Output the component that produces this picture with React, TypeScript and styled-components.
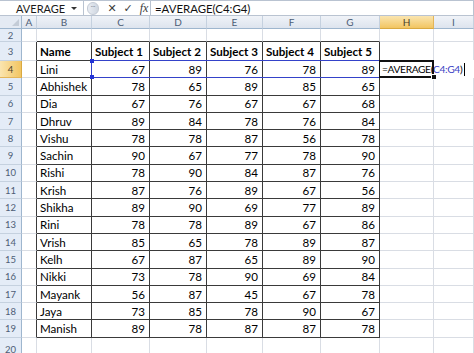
import React from 'react';
import styled, { createGlobalStyle } from 'styled-components';

const GlobalStyle = createGlobalStyle`
  html, body {
    margin: 0;
    padding: 0;
    background: #ffffff;
    overflow: hidden;
  }
  body {
    font-family: Lato, "Open Sans", sans-serif;
  }
`;

const COLS = ['A', 'B', 'C', 'D', 'E', 'F', 'G', 'H', 'I'];
const COL_WIDTHS = '22px 15px 55px 58px 57px 56px 58px 59px 54px 1fr';

const HEADERS = ['Name', 'Subject 1', 'Subject 2', 'Subject 3', 'Subject 4', 'Subject 5'];

const DATA: [string, number, number, number, number, number][] = [
  ['Lini', 67, 89, 76, 78, 89],
  ['Abhishek', 78, 65, 89, 85, 65],
  ['Dia', 67, 76, 67, 67, 68],
  ['Dhruv', 89, 84, 78, 76, 84],
  ['Vishu', 78, 78, 87, 56, 78],
  ['Sachin', 90, 67, 77, 78, 90],
  ['Rishi', 78, 90, 84, 87, 76],
  ['Krish', 87, 76, 89, 67, 56],
  ['Shikha', 89, 90, 69, 77, 89],
  ['Rini', 78, 78, 89, 67, 86],
  ['Vrish', 85, 65, 78, 89, 87],
  ['Kelh', 67, 87, 65, 89, 90],
  ['Nikki', 73, 78, 90, 69, 84],
  ['Mayank', 56, 87, 45, 67, 78],
  ['Jaya', 73, 85, 78, 90, 67],
  ['Manish', 89, 78, 87, 87, 78],
];

const Window = styled.div`
  width: 474px;
  height: 353px;
  display: flex;
  flex-direction: column;
  overflow: hidden;
  background: #fff;
`;

const TopStrip = styled.div`
  height: 3px;
  background: linear-gradient(#aab3bf, #c9d1dc);
`;

const FormulaBar = styled.div`
  height: 16px;
  display: flex;
  align-items: stretch;
  background: #dfe5ee;
`;

const NameBox = styled.div`
  width: 84px;
  display: flex;
  align-items: center;
  justify-content: space-between;
  padding: 0 6px 0 16px;
  box-sizing: border-box;
  background: #fff;
  border: 1px solid #b9c3d1;
  border-left: none;
  font-size: 11px;
  color: #1a1a1a;
`;

const DropArrow = styled.span`
  width: 0;
  height: 0;
  border-left: 3px solid transparent;
  border-right: 3px solid transparent;
  border-top: 3px solid #333;
`;

const Buttons = styled.div`
  width: 66px;
  display: flex;
  align-items: center;
  gap: 4px;
  padding-left: 3px;
  box-sizing: border-box;
  background: #fff;
  border-top: 1px solid #b9c3d1;
  border-bottom: 1px solid #b9c3d1;
`;

const Grip = styled.span`
  width: 12px;
  height: 13px;
  margin-right: 3px;
  border-radius: 7px;
  background: linear-gradient(90deg, #e9edf3, #cfd6e0);
  border: 1px solid #c3cad5;
  box-sizing: border-box;
  display: flex;
  align-items: flex-start;
  justify-content: center;
  font-size: 6px;
  line-height: 5px;
  color: #7d8797;
`;

const ToolGlyph = styled.span<{ $italic?: boolean }>`
  width: 12px;
  text-align: center;
  font-family: ${(p) => (p.$italic ? '"Liberation Serif", serif' : '"DejaVu Sans", sans-serif')};
  font-style: ${(p) => (p.$italic ? 'italic' : 'normal')};
  font-size: ${(p) => (p.$italic ? '12px' : '11px')};
  color: #3b3b3b;
`;

const FormulaInput = styled.div`
  flex: 1;
  display: flex;
  align-items: center;
  padding-left: 4px;
  background: #fff;
  border: 1px solid #b9c3d1;
  font-size: 11.4px;
  color: #111;
`;

const Separator = styled.div`
  height: 2px;
  background: linear-gradient(#d5dce6, #c4ccd8);
`;

const Sheet = styled.div`
  flex: 1;
  display: grid;
  grid-template-columns: ${COL_WIDTHS};
  grid-template-rows: 13px 13px 19px repeat(16, 17.3px) 24px;
  font-size: 11.6px;
  color: #000;
`;

const Corner = styled.div`
  grid-column: 1;
  grid-row: 1;
  background: #e4eaf3;
  border-right: 1px solid #9eb6ce;
  border-bottom: 1px solid #9eb6ce;
  position: relative;
  &::after {
    content: '';
    position: absolute;
    right: 2px;
    bottom: 2px;
    width: 0;
    height: 0;
    border-left: 7px solid transparent;
    border-bottom: 7px solid #c4ccd7;
  }
`;

const ColHead = styled.div<{ $c: number; $active?: boolean }>`
  grid-row: 1;
  grid-column: ${(p) => p.$c};
  display: flex;
  align-items: center;
  justify-content: center;
  background: ${(p) =>
    p.$active ? 'linear-gradient(#fae5b0, #f2c562)' : 'linear-gradient(#f0f3f8, #dde4ee)'};
  border-right: 1px solid ${(p) => (p.$active ? '#e3b55a' : '#c5d1df')};
  border-bottom: 1px solid ${(p) => (p.$active ? '#d9a941' : '#9eb6ce')};
  font-size: 10px;
  color: ${(p) => (p.$active ? '#4a3f2a' : '#4d5d75')};
`;

const RowHead = styled.div<{ $r: number; $active?: boolean }>`
  grid-row: ${(p) => p.$r};
  grid-column: 1;
  display: flex;
  align-items: center;
  justify-content: center;
  background: ${(p) =>
    p.$active ? 'linear-gradient(90deg, #fae5b0, #f2c562)' : '#e4ecf7'};
  border-right: 1px solid ${(p) => (p.$active ? '#d9a941' : '#9eb6ce')};
  border-bottom: 1px solid ${(p) => (p.$active ? '#e3b55a' : '#c5d1df')};
  font-size: 9.5px;
  color: ${(p) => (p.$active ? '#4a3f2a' : '#4d5d75')};
`;

const Cell = styled.div<{
  $r: number;
  $c: number;
  $right?: boolean;
  $bold?: boolean;
  $darkR?: boolean;
  $darkB?: boolean;
}>`
  grid-row: ${(p) => p.$r};
  grid-column: ${(p) => p.$c};
  display: flex;
  align-items: center;
  justify-content: ${(p) => (p.$right ? 'flex-end' : 'flex-start')};
  padding: 0 4px 0 3px;
  white-space: nowrap;
  overflow: hidden;
  font-weight: ${(p) => (p.$bold ? 700 : 400)};
  border-right: 1px solid ${(p) => (p.$darkR ? '#3a3a3a' : '#d9dde4')};
  border-bottom: 1px solid ${(p) => (p.$darkB ? '#3a3a3a' : '#d9dde4')};
`;

const RangeBox = styled.div`
  grid-column: 4 / 9;
  grid-row: 4;
  margin: -1px 0 0 -1px;
  border: 1px solid #3442c9;
  position: relative;
  pointer-events: none;
  z-index: 2;
`;

const Handle = styled.span<{ $bottom?: boolean }>`
  position: absolute;
  left: -2px;
  ${(p) => (p.$bottom ? 'bottom: -2px;' : 'top: -2px;')}
  width: 4px;
  height: 4px;
  background: #2233d6;
`;

const Editor = styled.div`
  grid-column: 9 / 11;
  grid-row: 4;
  margin: -1px 0 0 -1px;
  display: flex;
  align-items: center;
  padding-left: 3px;
  white-space: nowrap;
  font-size: 10.2px;
  letter-spacing: -0.35px;
  background: #fff;
  z-index: 3;
  position: relative;
  &::before {
    content: '';
    position: absolute;
    left: 0;
    top: 0;
    bottom: 0;
    width: 55px;
    border: 2px solid #111;
    border-left-width: 1px;
    box-sizing: border-box;
  }
`;

const FillHandle = styled.span`
  position: absolute;
  left: 52px;
  bottom: -2px;
  width: 4px;
  height: 4px;
  background: #111;
  border: 1px solid #fff;
`;

const Ref = styled.span`
  color: #3a3fc4;
`;

const Caret = styled.span`
  display: inline-block;
  width: 1px;
  height: 13px;
  margin-left: 2px;
  background: #000;
`;

type Spec = { text?: React.ReactNode; right?: boolean; bold?: boolean };

function cellSpec(row: number, col: number): Spec {
  // col: 0 = A ... 8 = I
  if (row === 3 && col >= 1 && col <= 6) return { text: HEADERS[col - 1], bold: true };
  if (row >= 4 && row <= 19 && col >= 1 && col <= 6) {
    const rec = DATA[row - 4];
    return col === 1 ? { text: rec[0] } : { text: rec[col - 1], right: true };
  }
  return {};
}

export default function App() {
  const rows = Array.from({ length: 19 }, (_, i) => i + 2);
  return (
    <>
      <GlobalStyle />
      <Window>
        <TopStrip />
        <FormulaBar>
          <NameBox>
            AVERAGE
            <DropArrow />
          </NameBox>
          <Buttons>
            <Grip>···</Grip>
            <ToolGlyph>✕</ToolGlyph>
            <ToolGlyph>✓</ToolGlyph>
            <ToolGlyph $italic>fx</ToolGlyph>
          </Buttons>
          <FormulaInput>=AVERAGE(C4:G4)</FormulaInput>
        </FormulaBar>
        <Separator />
        <Sheet>
          <Corner />
          {COLS.map((c, ci) => (
            <ColHead key={c} $c={ci + 2} $active={c === 'H'}>
              {c}
            </ColHead>
          ))}
          {rows.map((r, ri) => (
            <React.Fragment key={r}>
              <RowHead $r={ri + 2} $active={r === 4}>
                {r}
              </RowHead>
              {COLS.map((c, ci) => {
                const s = cellSpec(r, ci);
                const darkR = r >= 3 && r <= 19 && ci <= 6;
                const darkB = r <= 19 && ci >= 1 && ci <= 6;
                return (
                  <Cell
                    key={c}
                    $r={ri + 2}
                    $c={ci + 2}
                    $right={s.right}
                    $bold={s.bold}
                    $darkR={darkR}
                    $darkB={darkB}
                  >
                    {s.text}
                  </Cell>
                );
              })}
            </React.Fragment>
          ))}
          <RangeBox>
            <Handle />
            <Handle $bottom />
          </RangeBox>
          <Editor>
            =AVERAGE(<Ref>C4:G4</Ref>)<Caret />
            <FillHandle />
          </Editor>
        </Sheet>
      </Window>
    </>
  );
}
